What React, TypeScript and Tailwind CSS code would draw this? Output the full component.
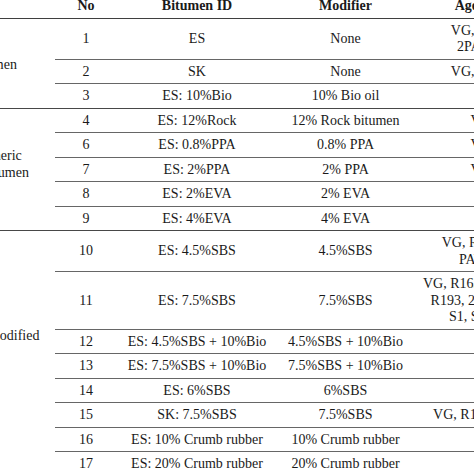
import React from 'react';

type Row = { no: string; id: string; mod: string; age: string[] };
type Group = { label: string[]; labelCls: string; rows: Row[] };

const groups: Group[] = [
  {
    label: ['Neat bitumen'],
    labelCls: 'align-middle pt-[7px] pb-[3px]',
    rows: [
      { no: '1', id: 'ES', mod: 'None', age: ['VG, R163, R193,', '2PAV, UV1, S2'] },
      { no: '2', id: 'SK', mod: 'None', age: ['VG, R163, R193,'] },
      { no: '3', id: 'ES: 10%Bio', mod: '10% Bio oil', age: ['VG'] },
    ],
  },
  {
    label: ['Non-polymeric', 'modified bitumen'],
    labelCls: 'align-middle pt-[4px] pb-[13px]',
    rows: [
      { no: '4', id: 'ES: 12%Rock', mod: '12% Rock bitumen', age: ['VG, 2PAV'] },
      { no: '6', id: 'ES: 0.8%PPA', mod: '0.8% PPA', age: ['VG, 2PAV'] },
      { no: '7', id: 'ES: 2%PPA', mod: '2% PPA', age: ['VG, 2PAV'] },
      { no: '8', id: 'ES: 2%EVA', mod: '2% EVA', age: ['VG'] },
      { no: '9', id: 'ES: 4%EVA', mod: '4% EVA', age: ['VG'] },
    ],
  },
  {
    label: ['Elastomeric modified', 'binder'],
    labelCls: 'align-top pt-[97px] pb-[3px]',
    rows: [
      { no: '10', id: 'ES: 4.5%SBS', mod: '4.5%SBS', age: ['VG, R163, R193, S1', 'PAV, 2PAV, S2'] },
      { no: '11', id: 'ES: 7.5%SBS', mod: '7.5%SBS', age: ['VG, R163, R173, R183, S1', 'R193, 2PAV, 3PAV, UV1', 'S1, S2, S3, S4, S5'] },
      { no: '12', id: 'ES: 4.5%SBS + 10%Bio', mod: '4.5%SBS + 10%Bio', age: ['VG'] },
      { no: '13', id: 'ES: 7.5%SBS + 10%Bio', mod: '7.5%SBS + 10%Bio', age: ['VG'] },
      { no: '14', id: 'ES: 6%SBS', mod: '6%SBS', age: ['VG'] },
      { no: '15', id: 'SK: 7.5%SBS', mod: '7.5%SBS', age: ['VG, R163, R193, 2PAV'] },
      { no: '16', id: 'ES: 10% Crumb rubber', mod: '10% Crumb rubber', age: ['VG'] },
      { no: '17', id: 'ES: 20% Crumb rubber', mod: '20% Crumb rubber', age: ['VG'] },
    ],
  },
];

const cell = 'px-[4px] pt-[4px] pb-[3px] text-center align-middle leading-[16.5px] whitespace-nowrap';

function Lines({ lines }: { lines: string[] }) {
  return (
    <>
      {lines.map((l, i) => (
        <React.Fragment key={i}>
          {i > 0 && <br />}
          {l}
        </React.Fragment>
      ))}
    </>
  );
}

export default function App() {
  return (
    <div className="w-[474px] h-[474px] overflow-hidden bg-white text-[#1a1a1a] font-['Liberation_Serif',serif] text-[14px]">
      <table className="table-fixed border-collapse w-[683px] -ml-[97px] -mt-[6px]">
        <colgroup>
          <col className="w-[152px]" />
          <col className="w-[62px]" />
          <col className="w-[160px]" />
          <col className="w-[137px]" />
          <col className="w-[172px]" />
        </colgroup>
        <thead>
          <tr className="font-bold">
            <th className={`${cell} border-b border-[#3f3f3f]`}>Type</th>
            <th className={`${cell} border-b border-[#3f3f3f]`}>No</th>
            <th className={`${cell} border-b border-[#3f3f3f]`}>Bitumen ID</th>
            <th className={`${cell} border-b border-[#3f3f3f]`}>Modifier</th>
            <th className={`${cell} border-b border-[#3f3f3f]`}>Ageing method</th>
          </tr>
        </thead>
        <tbody>
          {groups.map((g, gi) =>
            g.rows.map((r, ri) => {
              const line = ri === 0 ? 'border-t border-[#484848]' : 'border-t border-[#666666]';
              return (
                <tr key={`${gi}-${ri}`}>
                  {ri === 0 && (
                    <td rowSpan={g.rows.length} className={`px-[4px] text-center leading-[16.5px] whitespace-nowrap border-t border-[#484848] ${g.labelCls}`}>
                      <Lines lines={g.label} />
                    </td>
                  )}
                  <td className={`${cell} ${line}`}>{r.no}</td>
                  <td className={`${cell} ${line}`}>{r.id}</td>
                  <td className={`${cell} ${line}`}>{r.mod}</td>
                  <td className={`${cell} ${line}`}>
                    <Lines lines={r.age} />
                  </td>
                </tr>
              );
            })
          )}
        </tbody>
      </table>
    </div>
  );
}
